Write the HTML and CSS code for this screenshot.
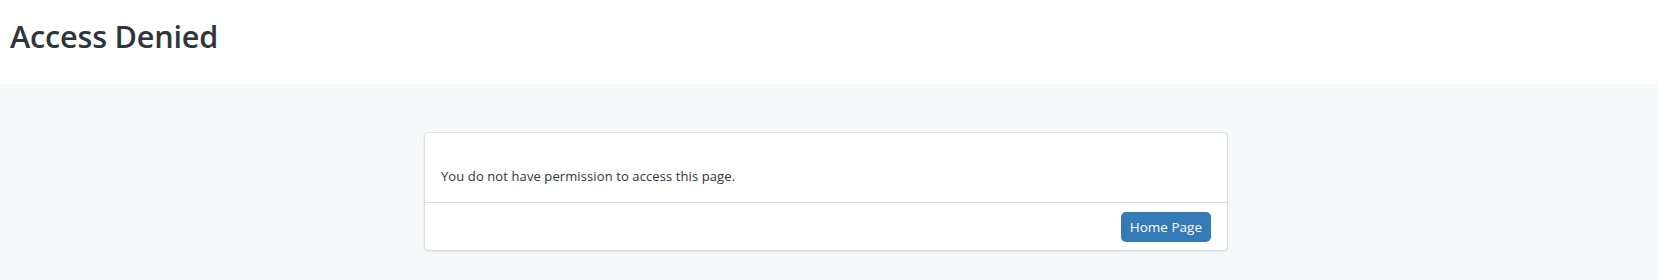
FILE: index.html
```html
<!DOCTYPE html>
<html>
<head>
<meta charset="utf-8">
<link rel="stylesheet" href="styles.css">
</head>
<body>
<header class="page-header">
  <h1 class="title">Access Denied</h1>
</header>
<main class="content">
  <div class="card">
    <div class="card-body">
      <p class="message">You do not have permission to access this page.</p>
    </div>
    <div class="card-footer">
      <button class="btn">Home Page</button>
    </div>
  </div>
</main>
</body>
</html>
```
FILE: styles.css
```css
html, body {
  margin: 0;
  padding: 0;
}
body {
  font-family: "Open Sans", "Noto Sans", sans-serif;
  background: #f7f8fa;
  height: 280px;
  color: #333;
}
.page-header {
  background: #fff;
  height: 84px;
  display: flex;
  align-items: center;
  padding-left: 10px;
}
.title {
  margin: 0;
  font-size: 30.6px;
  font-weight: 600;
  color: #2f353b;
  letter-spacing: -0.2px;
  position: relative;
  top: -6px;
}
.content {
  padding-top: 48px;
  display: flex;
  justify-content: center;
  padding-right: 6px;
}
.card {
  width: 802px;
  background: #fff;
  border: 1px solid #dcdcdc;
  border-radius: 5px;
  box-shadow: 0 1px 3px rgba(0,0,0,0.08);
}
.card-body {
  height: 69px;
  border-bottom: 1px solid #ddd;
  padding: 0 16px;
  display: flex;
  align-items: flex-end;
}
.message {
  margin: 0 0 16px 0;
  font-size: 13px;
  line-height: 20px;
  letter-spacing: 0.1px;
  color: #333;
}
.card-footer {
  display: flex;
  justify-content: flex-end;
  padding: 9px 16px 8px;
}
.btn {
  font-family: "Open Sans", "Noto Sans", sans-serif;
  background: #337ab7;
  color: #fff;
  border: none;
  border-radius: 5px;
  height: 30px;
  padding: 0 9px;
  font-size: 13.5px;
}
```
